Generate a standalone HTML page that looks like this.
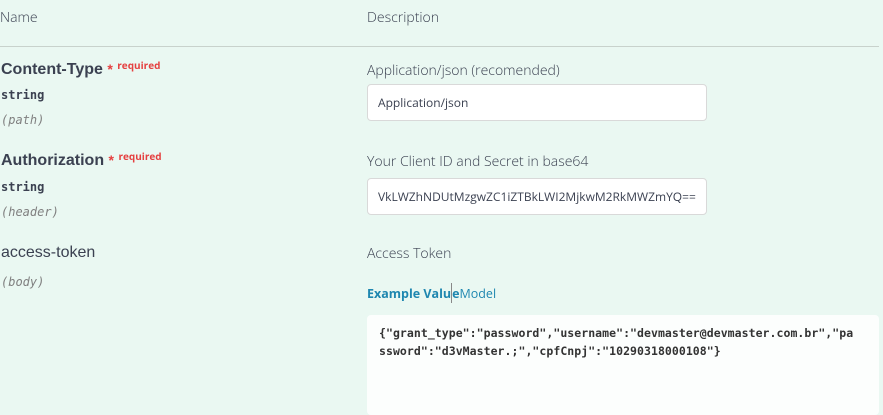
<!DOCTYPE html>
<html><head><meta charset="utf-8"><style>
body{margin:0;width:883px;height:409px;background:#eaf8f2;overflow:hidden;position:relative;font-family:"Open Sans","Liberation Sans",sans-serif;color:#3b4151}
.a{position:absolute;white-space:nowrap}
.h{font-size:14px;color:#3b4151;font-weight:300}
.line{position:absolute;left:0;top:46px;width:879px;height:1px;background:#c8d2cc}
.nm{font-family:"Liberation Sans",Arial,sans-serif;font-size:16px;font-weight:bold;color:#3b4151}
.req{font-family:"Open Sans","Liberation Sans",sans-serif;font-size:10px;color:#e54040;font-weight:bold;vertical-align:top;position:relative;top:-3px}
.star{color:#e54040;font-size:14px}
.ty{font-family:"DejaVu Sans Mono","Liberation Mono",monospace;font-size:12px;font-weight:600;color:#3b4151}
.in{font-family:"DejaVu Sans Mono","Liberation Mono",monospace;font-size:12px;font-style:italic;color:#808080}
.desc{font-size:14px;color:#3b4151;font-weight:300}
.box{position:absolute;left:367px;background:#fff;border:1px solid #d9d9d9;border-radius:4px;font-size:12px;line-height:35px;padding-left:10px;box-sizing:border-box;width:340px;height:37px}
.code{position:absolute;left:367px;top:315px;width:512px;height:100px;background:#fcfefd;border-radius:4px;font-family:"DejaVu Sans Mono","Liberation Mono",monospace;font-size:11.5px;font-weight:600;color:#333;padding:9px 0 0 12px;box-sizing:border-box;line-height:18px;letter-spacing:0.05px}
</style></head><body>
<div class="a h" style="left:0;top:8px">Name</div>
<div class="a h" style="left:367px;top:8px">Description</div>
<div class="line"></div>

<div class="a nm" style="left:1px;top:61px">Content-Type <span class="star">*</span> <span class="req">required</span></div>
<div class="a ty" style="left:1px;top:88px">string</div>
<div class="a in" style="left:1px;top:113px">(path)</div>
<div class="a desc" style="left:367px;top:61px">Application/json (recomended)</div>
<div class="box" style="top:84px">Application/json</div>

<div class="a nm" style="left:1px;top:152px">Authorization <span class="star">*</span> <span class="req">required</span></div>
<div class="a ty" style="left:1px;top:180px">string</div>
<div class="a in" style="left:1px;top:205px">(header)</div>
<div class="a desc" style="left:367px;top:152px">Your Client ID and Secret in base64</div>
<div class="box" style="top:178px">VkLWZhNDUtMzgwZC1iZTBkLWI2MjkwM2RkMWZmYQ==</div>

<div class="a" style="left:1px;top:244px;font-size:16px;color:#3b4151;font-family:'Liberation Sans',Arial,sans-serif">access-token</div>
<div class="a in" style="left:1px;top:275px">(body)</div>
<div class="a desc" style="left:367px;top:244px">Access Token</div>
<div class="a" style="left:367px;top:285px;font-size:12.5px"><b style="color:#1f87b0">Example Valu</b><span style="display:inline-block;width:1px;height:20px;background:#888;vertical-align:middle;margin-top:-4px"></span><b style="color:#1f87b0">e</b><span style="color:#1f87b0">Model</span></div>
<div class="code">{"grant_type":"password","username":"devmaster@devmaster.com.br","pa<br>ssword":"d3vMaster.;","cpfCnpj":"10290318000108"}</div>
</body></html>
